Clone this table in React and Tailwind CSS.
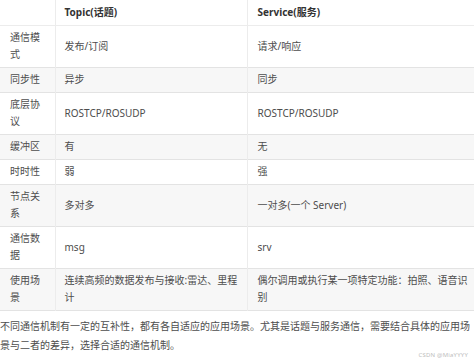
import React from 'react';

const rows = [
  { label: ['通信模', '式'], topic: '发布/订阅', service: '请求/响应' },
  { label: ['同步性'], topic: '异步', service: '同步', gray: true },
  { label: ['底层协', '议'], topic: 'ROSTCP/ROSUDP', service: 'ROSTCP/ROSUDP' },
  { label: ['缓冲区'], topic: '有', service: '无', gray: true },
  { label: ['时时性'], topic: '弱', service: '强' },
  { label: ['节点关', '系'], topic: '多对多', service: '一对多(一个 Server)', gray: true },
  { label: ['通信数', '据'], topic: 'msg', service: 'srv' },
  {
    label: ['使用场', '景'],
    topic: ['连续高频的数据发布与接收:雷达、里程', '计'],
    service: ['偶尔调用或执行某一项特定功能：拍照、语音识', '别'],
    gray: true,
  },
];

const Lines = ({ value }) =>
  Array.isArray(value)
    ? value.map((line, i) => (
        <React.Fragment key={i}>
          {i > 0 && <br />}
          {line}
        </React.Fragment>
      ))
    : value;

const App = () => {
  return (
    <div
      className="w-[474px] h-[364px] overflow-hidden bg-white text-[#4d4d4d] relative"
      style={{ fontFamily: '"Noto Sans", "Noto Sans CJK SC", sans-serif' }}
    >
      <table className="w-[484px] border-collapse text-[10px] leading-[17px] table-fixed">
        <colgroup>
          <col className="w-[55px]" />
          <col className="w-[192px]" />
          <col className="w-[237px]" />
        </colgroup>
        <thead>
          <tr className="h-[25px] border-b border-[#ececec]">
            <th className="p-0 border-r border-[#ececec]"></th>
            <th className="px-[9px] py-0 text-left font-bold text-[#333]">Topic(话题)</th>
            <th className="px-[10px] py-0 text-left font-bold text-[#333] border-l border-[#ececec]">Service(服务)</th>
          </tr>
        </thead>
        <tbody>
          {rows.map((row, i) => (
            <tr
              key={i}
              className={`border-b border-[#e3e3e3] ${row.label.length > 1 ? 'h-[42px]' : 'h-[25px]'} ${row.gray ? 'bg-[#f7f7f7]' : 'bg-white'}`}
            >
              <td className="pl-[10px] pr-1 py-0 border-r border-[#ececec] align-middle">
                <Lines value={row.label} />
              </td>
              <td className="px-[9px] py-0 align-middle">
                <Lines value={row.topic} />
              </td>
              <td className="px-[10px] py-0 border-l border-[#ececec] align-middle">
                <Lines value={row.service} />
              </td>
            </tr>
          ))}
        </tbody>
      </table>

      <p className="mt-[6px] text-[10px] leading-[19px] whitespace-nowrap">
        不同通信机制有一定的互补性，都有各自适应的应用场景。尤其是话题与服务通信，需要结合具体的应用场
        <br />
        景与二者的差异，选择合适的通信机制。
      </p>

      <span className="absolute right-[6px] bottom-[6px] text-[6px] leading-none text-[#bdbdbd] tracking-[0.2px]">
        CSDN @MiaYYYY
      </span>
    </div>
  );
};

export default App;
